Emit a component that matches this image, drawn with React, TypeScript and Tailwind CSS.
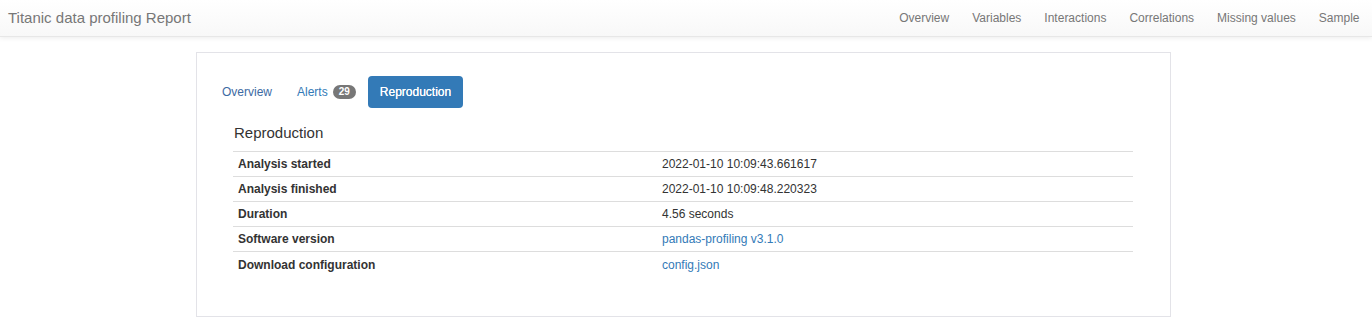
const navItems = ["Overview", "Variables", "Interactions", "Correlations", "Missing values", "Sample"];

const rows: { label: string; value: string; link?: boolean }[] = [
  { label: "Analysis started", value: "2022-01-10 10:09:43.661617" },
  { label: "Analysis finished", value: "2022-01-10 10:09:48.220323" },
  { label: "Duration", value: "4.56 seconds" },
  { label: "Software version", value: "pandas-profiling v3.1.0", link: true },
  { label: "Download configuration", value: "config.json", link: true },
];

export default function App() {
  return (
    <div className="min-h-[329px] bg-white text-[12px] text-[#333] font-['Liberation_Sans',Arial,sans-serif]">
      {/* navbar */}
      <div className="flex h-[37px] items-center justify-between border-b border-[#e7e7e7] bg-gradient-to-b from-white to-[#f8f8f8] shadow-[0_1px_5px_rgba(0,0,0,0.08)]">
        <span className="pl-[8px] text-[15px] text-[#777]">Titanic data profiling Report</span>
        <nav className="flex pr-[1px]">
          {navItems.map((item) => (
            <a key={item} className="px-[11.5px] text-[12px] text-[#777]">
              {item}
            </a>
          ))}
        </nav>
      </div>

      {/* card */}
      <div className="ml-[196px] mt-[15px] h-[265px] w-[975px] border border-[#e3e3e8] bg-white">
        <div className="flex items-center pl-[13px] pt-[23px]">
          <a className="px-[12px] leading-[32px] text-[#3d6aa3]">Overview</a>
          <a className="ml-[1px] flex items-center px-[12px] leading-[32px] text-[#337ab7]">
            Alerts
            <span className="ml-[5px] rounded-full bg-[#777] px-[6px] text-[10px] font-bold leading-[14px] text-white">
              29
            </span>
          </a>
          <a className="h-[32px] rounded-[4px] bg-[#337ab7] px-[12px] leading-[32px] text-white [text-shadow:0_0_0.4px_#fff]">
            Reproduction
          </a>
        </div>

        <div className="ml-[36px] mr-[37px] mt-[15px]">
          <h4 className="mb-[8px] pl-[1px] text-[15px] leading-[20px] text-[#333]">Reproduction</h4>
          <div className="border-t border-[#ddd]">
            {rows.map((r, i) => (
              <div
                key={r.label}
                className={`flex h-[25px] items-center ${i < rows.length - 1 ? "border-b border-[#ddd]" : ""}`}
              >
                <div className="w-[424px] pl-[5px] font-bold">{r.label}</div>
                <div className={`pl-[5px] ${r.link ? "text-[#337ab7]" : "text-[#333]"}`}>{r.value}</div>
              </div>
            ))}
          </div>
        </div>
      </div>
    </div>
  );
}
